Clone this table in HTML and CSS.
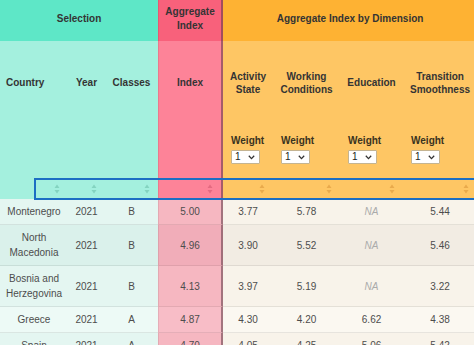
FILE: index.html
```html
<!DOCTYPE html>
<html>
<head>
<meta charset="utf-8">
<link rel="stylesheet" href="styles.css">
</head>
<body>
<div class="wrap">
  <table class="grid">
    <colgroup>
      <col class="c-country"><col class="c-year"><col class="c-classes"><col class="c-index">
      <col class="c-act"><col class="c-work"><col class="c-edu"><col class="c-trans">
    </colgroup>
    <thead>
      <tr class="groups">
        <th colspan="3" class="sel">Selection</th>
        <th class="idx">Aggregate<br>Index</th>
        <th colspan="4" class="dim">Aggregate Index by Dimension</th>
      </tr>
      <tr class="titles">
        <th class="sel country"><div class="title">Country</div></th>
        <th class="sel"><div class="title">Year</div></th>
        <th class="sel"><div class="title">Classes</div></th>
        <th class="idx"><div class="title">Index</div></th>
        <th class="dim"><div class="title">Activity<br>State</div>
          <div class="weight"><span class="wlabel">Weight</span>
            <span class="select"><select><option>1</option></select><svg class="chev" width="7" height="5" viewBox="0 0 7 5"><polyline points="0.8,0.8 3.5,3.6 6.2,0.8" fill="none" stroke="#333" stroke-width="1.3"/></svg></span></div></th>
        <th class="dim"><div class="title">Working<br>Conditions</div>
          <div class="weight"><span class="wlabel">Weight</span>
            <span class="select"><select><option>1</option></select><svg class="chev" width="7" height="5" viewBox="0 0 7 5"><polyline points="0.8,0.8 3.5,3.6 6.2,0.8" fill="none" stroke="#333" stroke-width="1.3"/></svg></span></div></th>
        <th class="dim"><div class="title">Education</div>
          <div class="weight"><span class="wlabel">Weight</span>
            <span class="select"><select><option>1</option></select><svg class="chev" width="7" height="5" viewBox="0 0 7 5"><polyline points="0.8,0.8 3.5,3.6 6.2,0.8" fill="none" stroke="#333" stroke-width="1.3"/></svg></span></div></th>
        <th class="dim"><div class="title">Transition<br>Smoothness</div>
          <div class="weight"><span class="wlabel">Weight</span>
            <span class="select"><select><option>1</option></select><svg class="chev" width="7" height="5" viewBox="0 0 7 5"><polyline points="0.8,0.8 3.5,3.6 6.2,0.8" fill="none" stroke="#333" stroke-width="1.3"/></svg></span></div></th>
      </tr>
      <tr class="sorts">
        <th class="sel"><svg class="sort" width="6" height="10" viewBox="0 0 6 10"><path d="M3 0.5 L5.5 4 L0.5 4 Z M3 9.5 L5.5 6 L0.5 6 Z"/></svg></th>
        <th class="sel"><svg class="sort" width="6" height="10" viewBox="0 0 6 10"><path d="M3 0.5 L5.5 4 L0.5 4 Z M3 9.5 L5.5 6 L0.5 6 Z"/></svg></th>
        <th class="sel"><svg class="sort" width="6" height="10" viewBox="0 0 6 10"><path d="M3 0.5 L5.5 4 L0.5 4 Z M3 9.5 L5.5 6 L0.5 6 Z"/></svg></th>
        <th class="idx"><svg class="sort" width="6" height="10" viewBox="0 0 6 10"><path d="M3 0.5 L5.5 4 L0.5 4 Z M3 9.5 L5.5 6 L0.5 6 Z"/></svg></th>
        <th class="dim"><svg class="sort" width="6" height="10" viewBox="0 0 6 10"><path d="M3 0.5 L5.5 4 L0.5 4 Z M3 9.5 L5.5 6 L0.5 6 Z"/></svg></th>
        <th class="dim"><svg class="sort" width="6" height="10" viewBox="0 0 6 10"><path d="M3 0.5 L5.5 4 L0.5 4 Z M3 9.5 L5.5 6 L0.5 6 Z"/></svg></th>
        <th class="dim"><svg class="sort" width="6" height="10" viewBox="0 0 6 10"><path d="M3 0.5 L5.5 4 L0.5 4 Z M3 9.5 L5.5 6 L0.5 6 Z"/></svg></th>
        <th class="dim"><svg class="sort" width="6" height="10" viewBox="0 0 6 10"><path d="M3 0.5 L5.5 4 L0.5 4 Z M3 9.5 L5.5 6 L0.5 6 Z"/></svg></th>
      </tr>
    </thead>
    <tbody>
      <tr class="r-base">
        <td class="sel">Montenegro</td><td class="sel">2021</td><td class="sel">B</td>
        <td class="idx">5.00</td>
        <td class="dim">3.77</td><td class="dim">5.78</td><td class="dim na">NA</td><td class="dim">5.44</td>
      </tr>
      <tr class="r-dark">
        <td class="sel">North Macedonia</td><td class="sel">2021</td><td class="sel">B</td>
        <td class="idx">4.96</td>
        <td class="dim">3.90</td><td class="dim">5.52</td><td class="dim na">NA</td><td class="dim">5.46</td>
      </tr>
      <tr class="r-base">
        <td class="sel">Bosnia and Herzegovina</td><td class="sel">2021</td><td class="sel">B</td>
        <td class="idx">4.13</td>
        <td class="dim">3.97</td><td class="dim">5.19</td><td class="dim na">NA</td><td class="dim">3.22</td>
      </tr>
      <tr class="r-light">
        <td class="sel">Greece</td><td class="sel">2021</td><td class="sel">A</td>
        <td class="idx">4.87</td>
        <td class="dim">4.30</td><td class="dim">4.20</td><td class="dim">6.62</td><td class="dim">4.38</td>
      </tr>
      <tr class="r-base">
        <td class="sel">Spain</td><td class="sel">2021</td><td class="sel">A</td>
        <td class="idx">4.70</td>
        <td class="dim">4.05</td><td class="dim">4.25</td><td class="dim">5.06</td><td class="dim">5.42</td>
      </tr>
    </tbody>
  </table>
  <div class="focus-ring"></div>
</div>
</body>
</html>
```

FILE: styles.css
```css
html, body {
  margin: 0;
  padding: 0;
  overflow: hidden;
  background: #ffffff;
}

.wrap {
  position: relative;
  width: 477px;
  font-family: "Liberation Sans", Arial, sans-serif;
  font-size: 10px;
  color: #333;
}

.grid {
  table-layout: fixed;
  width: 477px;
  border-collapse: separate;
  border-spacing: 0;
}

.c-country { width: 68px; }
.c-year { width: 37px; }
.c-classes { width: 53px; }
.c-index { width: 65px; }
.c-act { width: 50px; }
.c-work { width: 67px; }
.c-edu { width: 63px; }
.c-trans { width: 74px; }

th {
  font-weight: bold;
  padding: 0;
  line-height: 13.5px;
  color: #343434;
}

.idx {
  border-left: 1px solid rgba(0, 0, 0, 0.08);
  border-right: 2px solid rgba(95, 60, 70, 0.55);
}

/* group row */
.groups th {
  height: 41px;
  padding-bottom: 4px;
  box-sizing: border-box;
  vertical-align: middle;
  text-align: center;
}
.groups .sel { background: #5ee7c7; }
.groups .idx { background: #f8617b; }
.groups .dim { background: #feb233; }

/* titles row */
.titles th {
  height: 137px;
  vertical-align: top;
  text-align: center;
}
.titles .sel { background: #a4f0de; }
.titles .idx { background: #fd8398; }
.titles .dim { background: #fec664; }
.titles .country { text-align: left; padding-left: 6px; }

.title {
  height: 84px;
  display: flex;
  flex-direction: column;
  justify-content: center;
}

.weight {
  display: flex;
  flex-direction: column;
  align-items: flex-start;
  padding: 10px 0 0 8px;
  gap: 3px;
}
.wlabel {
  line-height: 12px;
  color: #3a3320;
}

.select {
  position: relative;
  display: inline-block;
}
.select select {
  appearance: none;
  -webkit-appearance: none;
  width: 29px;
  height: 14px;
  margin: 0;
  padding: 0 0 0 3px;
  font-family: "Liberation Sans", Arial, sans-serif;
  font-size: 10px;
  line-height: 12px;
  color: #222;
  background: #ffffff;
  border: 1px solid #c4b492;
  border-radius: 1px;
  box-sizing: border-box;
}
.chev {
  position: absolute;
  right: 5px;
  top: 5px;
  pointer-events: none;
}

/* sort row */
.sorts th {
  height: 21px;
  box-sizing: border-box;
  text-align: right;
  padding-right: 8px;
  vertical-align: middle;
}
.sorts .sel { background: #a4f0de; }
.sorts .idx { background: #fd8398; }
.sorts .dim { background: #fec664; }
.sort { display: block; margin-left: auto; }
.sorts .sel .sort { fill: #84d4c0; }
.sorts .idx .sort { fill: #e46a80; }
.sorts .dim .sort { fill: #e9aa4c; }

/* body */
td {
  padding: 5px 5px;
  line-height: 15px;
  text-align: center;
  color: #4d4d4d;
  border-bottom: 1px solid rgba(0, 0, 0, 0.08);
  vertical-align: middle;
}
td.na { color: #ababab; font-style: italic; }

.r-base .sel { background: #e4f6f1; }
.r-base .idx { background: #f6b7c1; }
.r-base .dim { background: #f8f3ea; }

.r-dark .sel { background: #daf1eb; }
.r-dark .idx { background: #f1adb9; }
.r-dark .dim { background: #f2ece3; }

.r-light .sel { background: #edfaf6; }
.r-light .idx { background: #f8bdc7; }
.r-light .dim { background: #fbf8f1; }

.focus-ring {
  position: absolute;
  left: 34px;
  top: 178px;
  width: 460px;
  height: 22px;
  box-sizing: border-box;
  border: 2px solid #1c6ec3;
  pointer-events: none;
}
```
